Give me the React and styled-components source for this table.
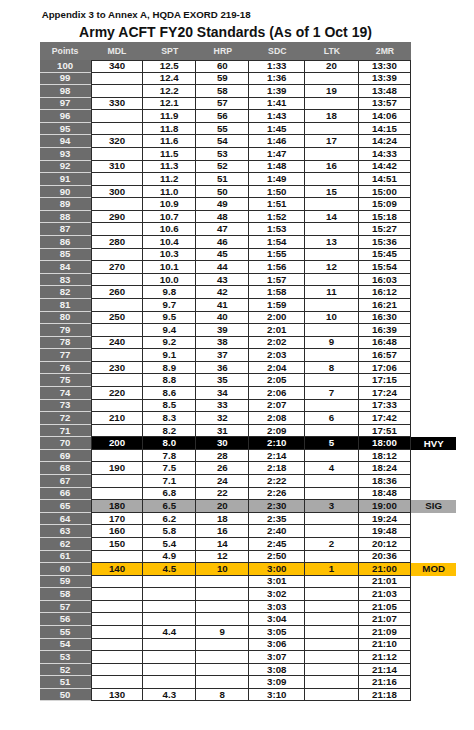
import styled, { createGlobalStyle } from 'styled-components';

const GlobalStyle = createGlobalStyle`
  html, body {
    margin: 0;
    padding: 0;
    background: #ffffff;
  }
  body {
    font-family: 'Liberation Sans', Arial, sans-serif;
    color: #111;
  }
`;

const rows = [
  [100, '340', '12.5', '60', '1:33', '20', '13:30'],
  [99, '', '12.4', '59', '1:36', '', '13:39'],
  [98, '', '12.2', '58', '1:39', '19', '13:48'],
  [97, '330', '12.1', '57', '1:41', '', '13:57'],
  [96, '', '11.9', '56', '1:43', '18', '14:06'],
  [95, '', '11.8', '55', '1:45', '', '14:15'],
  [94, '320', '11.6', '54', '1:46', '17', '14:24'],
  [93, '', '11.5', '53', '1:47', '', '14:33'],
  [92, '310', '11.3', '52', '1:48', '16', '14:42'],
  [91, '', '11.2', '51', '1:49', '', '14:51'],
  [90, '300', '11.0', '50', '1:50', '15', '15:00'],
  [89, '', '10.9', '49', '1:51', '', '15:09'],
  [88, '290', '10.7', '48', '1:52', '14', '15:18'],
  [87, '', '10.6', '47', '1:53', '', '15:27'],
  [86, '280', '10.4', '46', '1:54', '13', '15:36'],
  [85, '', '10.3', '45', '1:55', '', '15:45'],
  [84, '270', '10.1', '44', '1:56', '12', '15:54'],
  [83, '', '10.0', '43', '1:57', '', '16:03'],
  [82, '260', '9.8', '42', '1:58', '11', '16:12'],
  [81, '', '9.7', '41', '1:59', '', '16:21'],
  [80, '250', '9.5', '40', '2:00', '10', '16:30'],
  [79, '', '9.4', '39', '2:01', '', '16:39'],
  [78, '240', '9.2', '38', '2:02', '9', '16:48'],
  [77, '', '9.1', '37', '2:03', '', '16:57'],
  [76, '230', '8.9', '36', '2:04', '8', '17:06'],
  [75, '', '8.8', '35', '2:05', '', '17:15'],
  [74, '220', '8.6', '34', '2:06', '7', '17:24'],
  [73, '', '8.5', '33', '2:07', '', '17:33'],
  [72, '210', '8.3', '32', '2:08', '6', '17:42'],
  [71, '', '8.2', '31', '2:09', '', '17:51'],
  [70, '200', '8.0', '30', '2:10', '5', '18:00', 'HVY'],
  [69, '', '7.8', '28', '2:14', '', '18:12'],
  [68, '190', '7.5', '26', '2:18', '4', '18:24'],
  [67, '', '7.1', '24', '2:22', '', '18:36'],
  [66, '', '6.8', '22', '2:26', '', '18:48'],
  [65, '180', '6.5', '20', '2:30', '3', '19:00', 'SIG'],
  [64, '170', '6.2', '18', '2:35', '', '19:24'],
  [63, '160', '5.8', '16', '2:40', '', '19:48'],
  [62, '150', '5.4', '14', '2:45', '2', '20:12'],
  [61, '', '4.9', '12', '2:50', '', '20:36'],
  [60, '140', '4.5', '10', '3:00', '1', '21:00', 'MOD'],
  [59, '', '', '', '3:01', '', '21:01'],
  [58, '', '', '', '3:02', '', '21:03'],
  [57, '', '', '', '3:03', '', '21:05'],
  [56, '', '', '', '3:04', '', '21:07'],
  [55, '', '4.4', '9', '3:05', '', '21:09'],
  [54, '', '', '', '3:06', '', '21:10'],
  [53, '', '', '', '3:07', '', '21:12'],
  [52, '', '', '', '3:08', '', '21:14'],
  [51, '', '', '', '3:09', '', '21:16'],
  [50, '130', '4.3', '8', '3:10', '', '21:18'],
];

const columns = ['Points', 'MDL', 'SPT', 'HRP', 'SDC', 'LTK', '2MR'];
const widths = [51.2, 52.6, 53, 53, 56, 53.4, 52.6, 44.7];

const bands = {
  HVY: { bg: '#000000', fg: '#ffffff' },
  SIG: { bg: '#a9a9a9', fg: '#111111' },
  MOD: { bg: '#ffc000', fg: '#111111' },
};

const Page = styled.div`
  padding: 9.2px 0 0 39.5px;
`;

const Heading = styled.div`
  width: 372px;
`;

const Ref = styled.div`
  padding-left: 2.2px;
  font-size: 9.7px;
  line-height: 12px;
  font-weight: 700;
  color: #111;
`;

const Title = styled.h1`
  margin: 2.6px 0 0;
  text-align: center;
  font-size: 14px;
  line-height: 16px;
  font-weight: 700;
  color: #111;
`;

const Table = styled.table`
  margin-top: 2.2px;
  border-collapse: separate;
  border-spacing: 0;
  table-layout: fixed;
  width: 416.5px;
`;

const Col = styled.col`
  width: ${(p) => p.$w}px;
`;

const HeadCell = styled.th`
  height: 18px;
  padding: 0;
  background: ${(p) => (p.$blank ? '#ffffff' : '#717171')};
  color: #e9e9e9;
  font-size: 8.7px;
  font-weight: 700;
  text-align: center;
  vertical-align: middle;
`;

const Row = styled.tr`
  height: 12.58px;
`;

const PointCell = styled.td`
  padding: 0;
  background: #6c6c6c;
  border-bottom: 1px solid #d6d6d6;
  color: #f2f2f2;
  font-size: 9.6px;
  font-weight: 700;
  text-align: center;
  line-height: 10px;
`;

const Cell = styled.td`
  padding: 0;
  background: ${(p) => (p.$band ? p.$band.bg : '#ffffff')};
  color: ${(p) => (p.$band ? p.$band.fg : '#111111')};
  border-right: ${(p) => (p.$last ? '1.5px' : '1px')} solid #2b2b2b;
  border-bottom: 1px solid #2b2b2b;
  border-left: ${(p) => (p.$first ? '1px solid #2b2b2b' : 'none')};
  border-top: ${(p) => (p.$top ? '1px solid #2b2b2b' : 'none')};
  font-size: 9.7px;
  font-weight: 700;
  text-align: center;
  line-height: 10px;
`;

const Label = styled.td`
  padding: 0;
  background: ${(p) => (p.$band ? p.$band.bg : 'transparent')};
  color: ${(p) => (p.$band ? p.$band.fg : '#111')};
  font-size: 9.7px;
  font-weight: 700;
  text-align: center;
  line-height: 10px;
`;

export default function App() {
  return (
    <>
      <GlobalStyle />
      <Page>
        <Heading>
          <Ref>Appendix 3 to Annex A, HQDA EXORD 219-18</Ref>
          <Title>Army ACFT FY20 Standards (As of 1 Oct 19)</Title>
        </Heading>
        <Table>
          <colgroup>
            {widths.map((w, i) => (
              <Col key={i} $w={w} />
            ))}
          </colgroup>
          <thead>
            <tr>
              {columns.map((c) => (
                <HeadCell key={c}>{c}</HeadCell>
              ))}
              <HeadCell $blank />
            </tr>
          </thead>
          <tbody>
            {rows.map((r, ri) => {
              const [points, ...vals] = r.slice(0, 7);
              const tag = r[7];
              const band = tag ? bands[tag] : null;
              return (
                <Row key={points}>
                  <PointCell>{points}</PointCell>
                  {vals.map((v, i) => (
                    <Cell
                      key={i}
                      $band={band}
                      $first={i === 0}
                      $last={i === vals.length - 1}
                      $top={ri === 0}
                    >
                      {v}
                    </Cell>
                  ))}
                  <Label $band={band}>{tag || ''}</Label>
                </Row>
              );
            })}
          </tbody>
        </Table>
      </Page>
    </>
  );
}
